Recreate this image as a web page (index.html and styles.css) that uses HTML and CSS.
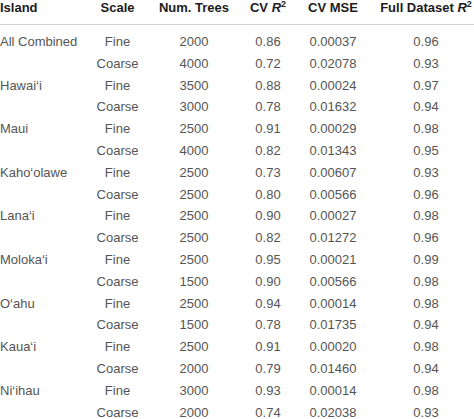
FILE: index.html
```html
<!DOCTYPE html>
<html lang="en">
<head>
<meta charset="utf-8">
<title>Random forest results by island</title>
<link rel="stylesheet" href="styles.css">
</head>
<body>
<div class="results">
  <div class="row head">
    <div class="cell first">Island</div>
    <div class="cell">Scale</div>
    <div class="cell">Num. Trees</div>
    <div class="cell">CV <i>R</i><sup>2</sup></div>
    <div class="cell">CV MSE</div>
    <div class="cell">Full Dataset <i>R</i><sup>2</sup></div>
  </div>
  <div class="body">
    <div class="row"><div class="cell first">All Combined</div><div class="cell">Fine</div><div class="cell">2000</div><div class="cell">0.86</div><div class="cell">0.00037</div><div class="cell">0.96</div></div>
    <div class="row"><div class="cell first"></div><div class="cell">Coarse</div><div class="cell">4000</div><div class="cell">0.72</div><div class="cell">0.02078</div><div class="cell">0.93</div></div>
    <div class="row"><div class="cell first">Hawai‘i</div><div class="cell">Fine</div><div class="cell">3500</div><div class="cell">0.88</div><div class="cell">0.00024</div><div class="cell">0.97</div></div>
    <div class="row"><div class="cell first"></div><div class="cell">Coarse</div><div class="cell">3000</div><div class="cell">0.78</div><div class="cell">0.01632</div><div class="cell">0.94</div></div>
    <div class="row"><div class="cell first">Maui</div><div class="cell">Fine</div><div class="cell">2500</div><div class="cell">0.91</div><div class="cell">0.00029</div><div class="cell">0.98</div></div>
    <div class="row"><div class="cell first"></div><div class="cell">Coarse</div><div class="cell">4000</div><div class="cell">0.82</div><div class="cell">0.01343</div><div class="cell">0.95</div></div>
    <div class="row"><div class="cell first">Kaho‘olawe</div><div class="cell">Fine</div><div class="cell">2500</div><div class="cell">0.73</div><div class="cell">0.00607</div><div class="cell">0.93</div></div>
    <div class="row"><div class="cell first"></div><div class="cell">Coarse</div><div class="cell">2500</div><div class="cell">0.80</div><div class="cell">0.00566</div><div class="cell">0.96</div></div>
    <div class="row"><div class="cell first">Lana‘i</div><div class="cell">Fine</div><div class="cell">2500</div><div class="cell">0.90</div><div class="cell">0.00027</div><div class="cell">0.98</div></div>
    <div class="row"><div class="cell first"></div><div class="cell">Coarse</div><div class="cell">2500</div><div class="cell">0.82</div><div class="cell">0.01272</div><div class="cell">0.96</div></div>
    <div class="row"><div class="cell first">Moloka‘i</div><div class="cell">Fine</div><div class="cell">2500</div><div class="cell">0.95</div><div class="cell">0.00021</div><div class="cell">0.99</div></div>
    <div class="row"><div class="cell first"></div><div class="cell">Coarse</div><div class="cell">1500</div><div class="cell">0.90</div><div class="cell">0.00566</div><div class="cell">0.98</div></div>
    <div class="row"><div class="cell first">O‘ahu</div><div class="cell">Fine</div><div class="cell">2500</div><div class="cell">0.94</div><div class="cell">0.00014</div><div class="cell">0.98</div></div>
    <div class="row"><div class="cell first"></div><div class="cell">Coarse</div><div class="cell">1500</div><div class="cell">0.78</div><div class="cell">0.01735</div><div class="cell">0.94</div></div>
    <div class="row"><div class="cell first">Kaua‘i</div><div class="cell">Fine</div><div class="cell">2500</div><div class="cell">0.91</div><div class="cell">0.00020</div><div class="cell">0.98</div></div>
    <div class="row"><div class="cell first"></div><div class="cell">Coarse</div><div class="cell">2000</div><div class="cell">0.79</div><div class="cell">0.01460</div><div class="cell">0.94</div></div>
    <div class="row"><div class="cell first">Ni‘ihau</div><div class="cell">Fine</div><div class="cell">3000</div><div class="cell">0.93</div><div class="cell">0.00014</div><div class="cell">0.98</div></div>
    <div class="row"><div class="cell first"></div><div class="cell">Coarse</div><div class="cell">2000</div><div class="cell">0.74</div><div class="cell">0.02038</div><div class="cell">0.93</div></div>
  </div>
</div>
</body>
</html>
```

FILE: styles.css
```css
html, body {
  margin: 0;
  padding: 0;
  background: #ffffff;
  overflow: hidden;
}

.results {
  width: 481px;
  font-family: "Liberation Sans", Arial, sans-serif;
  font-size: 13px;
  color: #555555;
}

.row {
  display: grid;
  grid-template-columns: 88px 59px 94px 54px 76px 110px;
  height: 21.8px;
  align-items: center;
  line-height: 15px;
}

.cell {
  text-align: center;
  white-space: nowrap;
}

.cell.first {
  text-align: left;
}

.row.head {
  height: 24px;
  align-items: start;
  font-weight: bold;
  color: #1c1c1c;
  border-bottom: 1px solid #d2d2d2;
  width: 474px;
}

.head sup {
  font-size: 9px;
  line-height: 0;
  vertical-align: 5px;
}

.body {
  padding-top: 5.6px;
}
```
